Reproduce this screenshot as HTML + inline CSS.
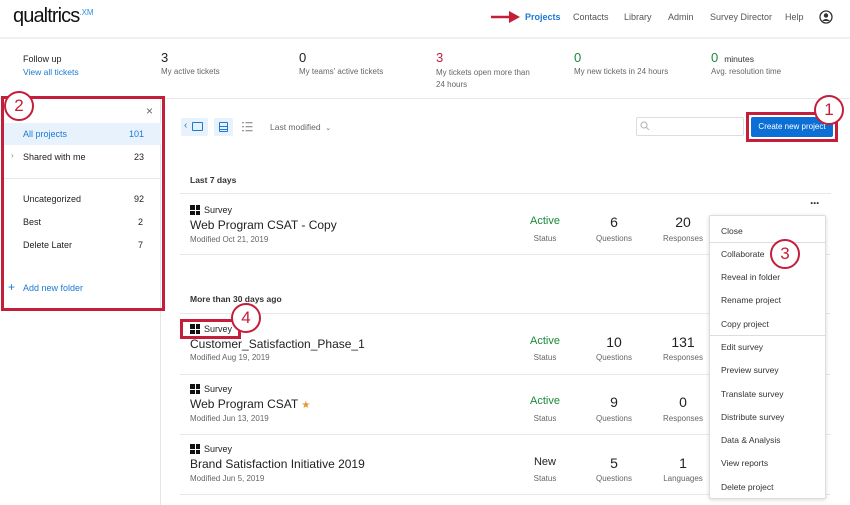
<!DOCTYPE html>
<html><head><meta charset="utf-8"><style>
*{margin:0;padding:0;box-sizing:border-box}
body{width:850px;height:505px;overflow:hidden;background:#fff;font-family:"Liberation Sans",sans-serif;color:#222;position:relative}
.a{position:absolute;white-space:nowrap}
.s9{font-size:9px}
.s8{font-size:8px;color:#666}
.blue{color:#1b79d4}
.hl{position:absolute;height:1px;background:#e8e8e8}
.red{border:3px solid #c41e3a}
.circ{position:absolute;width:30px;height:30px;border:2.5px solid #c41e3a;border-radius:50%;background:#fff;color:#c41e3a;font-size:17px;text-align:center;line-height:25px}
.num{font-size:14px;color:#222;text-align:center;width:60px}
.lbl{font-size:8px;color:#666;text-align:center;width:60px}
.mi{position:absolute;left:721px;font-size:8.5px;color:#333}
.sv{position:absolute;width:10px;height:10px}
.sv i{position:absolute;width:4.5px;height:4.5px;background:#111}
</style></head><body>
<!-- header -->
<div class="a" style="left:13px;top:5px;font-size:20px;letter-spacing:-0.9px;color:#111">qualtrics<span style="font-size:8px;letter-spacing:0;color:#2b8fd8;vertical-align:top;position:relative;top:3px">.XM</span></div>
<svg class="a" style="left:491px;top:10px" width="30" height="14"><line x1="0" y1="7" x2="22" y2="7" stroke="#c41e3a" stroke-width="2.5"/><polygon points="18,1 29,7 18,13" fill="#c41e3a"/></svg>
<div class="a s9 blue" style="left:525px;top:12px;font-weight:bold">Projects</div>
<div class="a s9" style="left:573px;top:12px;color:#555">Contacts</div>
<div class="a s9" style="left:624px;top:12px;color:#555">Library</div>
<div class="a s9" style="left:668px;top:12px;color:#555">Admin</div>
<div class="a s9" style="left:710px;top:12px;color:#555">Survey Director</div>
<div class="a s9" style="left:785px;top:12px;color:#555">Help</div>
<svg class="a" style="left:819px;top:10px" width="14" height="14"><circle cx="7" cy="7" r="6" fill="none" stroke="#333" stroke-width="1.3"/><circle cx="7" cy="5.5" r="2.2" fill="#333"/><path d="M3 11 Q7 7 11 11" fill="#333"/></svg>
<div class="a" style="left:0;top:37px;width:850px;height:2px;background:#f0f0f0"></div>
<!-- tickets -->
<div class="a s9" style="left:23px;top:54px">Follow up</div>
<div class="a blue" style="left:23px;top:67px;font-size:8.5px">View all tickets</div>
<div class="a" style="left:161px;top:50px;font-size:13px">3</div>
<div class="a s8" style="left:161px;top:67px">My active tickets</div>
<div class="a" style="left:299px;top:50px;font-size:13px">0</div>
<div class="a s8" style="left:299px;top:67px">My teams' active tickets</div>
<div class="a" style="left:436px;top:50px;font-size:13px;color:#c41e3a">3</div>
<div class="a s8" style="left:436px;top:67px;line-height:12px">My tickets open more than<br>24 hours</div>
<div class="a" style="left:574px;top:50px;font-size:13px;color:#1a8a3a">0</div>
<div class="a s8" style="left:574px;top:67px">My new tickets in 24 hours</div>
<div class="a" style="left:711px;top:50px;font-size:13px;color:#1a8a3a">0 <span style="font-size:8.5px;color:#333">&nbsp;minutes</span></div>
<div class="a s8" style="left:711px;top:67px">Avg. resolution time</div>
<div class="a" style="left:0;top:98px;width:850px;height:1px;background:#e8e8e8"></div>
<!-- left panel -->
<div class="a" style="left:160px;top:99px;width:1px;height:406px;background:#e6e6e6"></div>
<div class="a red" style="left:1px;top:96px;width:164px;height:215px"></div>
<div class="a" style="left:146px;top:104px;font-size:12px;color:#666">×</div>
<div class="a" style="left:4px;top:123px;width:157px;height:22px;background:#e8f2fc"></div>
<div class="a blue s9" style="left:23px;top:129px">All projects</div>
<div class="a blue s9" style="left:129px;top:129px">101</div>
<div class="a" style="left:11px;top:151px;font-size:8px;color:#888">›</div>
<div class="a s9" style="left:23px;top:152px">Shared with me</div>
<div class="a s9" style="left:134px;top:152px">23</div>
<div class="hl" style="left:4px;top:178px;width:157px"></div>
<div class="a s9" style="left:23px;top:194px">Uncategorized</div>
<div class="a s9" style="left:134px;top:194px">92</div>
<div class="a s9" style="left:23px;top:217px">Best</div>
<div class="a s9" style="left:138px;top:217px">2</div>
<div class="a s9" style="left:23px;top:240px">Delete Later</div>
<div class="a s9" style="left:138px;top:240px">7</div>
<div class="a blue" style="left:8px;top:280px;font-size:12px">+</div>
<div class="a blue s9" style="left:23px;top:283px">Add new folder</div>
<div class="circ" style="left:4px;top:91px">2</div>
<!-- toolbar -->
<div class="a" style="left:181px;top:118px;width:27px;height:18px;background:#e8f2fc;border-radius:2px"></div>
<div class="a blue" style="left:184px;top:120px;font-size:10px">‹</div>
<div class="a" style="left:192px;top:122px;width:11px;height:9px;border:1.3px solid #1b79d4;border-radius:1px"></div>
<div class="a" style="left:214px;top:118px;width:19px;height:18px;background:#e8f2fc;border-radius:2px"></div>
<div class="a" style="left:219px;top:122px;width:9px;height:10px;border:1.3px solid #1b79d4;border-radius:1px;background:linear-gradient(#1b79d4,#1b79d4) 0 3px/100% 1px no-repeat,linear-gradient(#1b79d4,#1b79d4) 0 6px/100% 1px no-repeat"></div>
<svg class="a" style="left:242px;top:122px" width="11" height="10"><g fill="#999"><rect x="0" y="0" width="2" height="1.3"/><rect x="0" y="4" width="2" height="1.3"/><rect x="0" y="8" width="2" height="1.3"/><rect x="3.5" y="0" width="7" height="1.3"/><rect x="3.5" y="4" width="7" height="1.3"/><rect x="3.5" y="8" width="7" height="1.3"/></g></svg>
<div class="a" style="left:270px;top:122px;font-size:8.5px;color:#666">Last modified &nbsp;<span style="font-size:7px">⌄</span></div>
<div class="a" style="left:636px;top:117px;width:108px;height:19px;border:1px solid #ddd;border-radius:2px"></div>
<svg class="a" style="left:640px;top:121px" width="10" height="10"><circle cx="4" cy="4" r="3" fill="none" stroke="#bbb" stroke-width="1.2"/><line x1="6.2" y1="6.2" x2="9" y2="9" stroke="#bbb" stroke-width="1.2"/></svg>
<div class="a red" style="left:746px;top:112px;width:92px;height:30px"></div>
<div class="a" style="left:751px;top:117px;width:82px;height:20px;background:#0b6fd6;border-radius:2px;color:#fff;font-size:8px;text-align:center;line-height:20px">Create new project</div>
<div class="circ" style="left:814px;top:95px">1</div>
<!-- list -->
<div class="a" style="left:190px;top:175px;font-size:8.5px;font-weight:bold;color:#333">Last 7 days</div>
<div class="hl" style="left:180px;top:193px;width:651px"></div>
<div class="a" style="left:810px;top:199px;font-size:12px;letter-spacing:-1px;font-weight:bold;line-height:8px">···</div>
<div class="hl" style="left:180px;top:254px;width:651px"></div>
<div class="a" style="left:190px;top:294px;font-size:8.5px;font-weight:bold;color:#333">More than 30 days ago</div>
<div class="hl" style="left:180px;top:313px;width:651px"></div>
<div class="hl" style="left:180px;top:374px;width:651px"></div>
<div class="hl" style="left:180px;top:434px;width:651px"></div>
<div class="hl" style="left:180px;top:494px;width:651px"></div>

<div class="sv" style="left:190px;top:205px"><i style="left:0;top:0"></i><i style="left:5.5px;top:0"></i><i style="left:0;top:5.5px"></i><i style="left:5.5px;top:5.5px"></i></div>
<div class="a s9" style="left:204px;top:205px">Survey</div>
<div class="a" style="left:190px;top:218px;font-size:12px">Web Program CSAT - Copy</div>
<div class="a s8" style="left:190px;top:235px">Modified Oct 21, 2019</div>
<div class="a num" style="left:515px;top:215px;font-size:11px;color:#1a8a3a">Active</div>
<div class="a lbl" style="left:515px;top:234px">Status</div>
<div class="a num" style="left:584px;top:214px">6</div>
<div class="a lbl" style="left:584px;top:234px">Questions</div>
<div class="a num" style="left:653px;top:214px">20</div>
<div class="a lbl" style="left:653px;top:234px">Responses</div>

<div class="sv" style="left:190px;top:324px"><i style="left:0;top:0"></i><i style="left:5.5px;top:0"></i><i style="left:0;top:5.5px"></i><i style="left:5.5px;top:5.5px"></i></div>
<div class="a s9" style="left:204px;top:324px">Survey</div>
<div class="a red" style="left:180px;top:319px;width:61px;height:20px"></div>
<div class="circ" style="left:231px;top:303px">4</div>
<div class="a" style="left:190px;top:337px;font-size:12px">Customer_Satisfaction_Phase_1</div>
<div class="a s8" style="left:190px;top:353px">Modified Aug 19, 2019</div>
<div class="a num" style="left:515px;top:335px;font-size:11px;color:#1a8a3a">Active</div>
<div class="a lbl" style="left:515px;top:353px">Status</div>
<div class="a num" style="left:584px;top:334px">10</div>
<div class="a lbl" style="left:584px;top:353px">Questions</div>
<div class="a num" style="left:653px;top:334px">131</div>
<div class="a lbl" style="left:653px;top:353px">Responses</div>

<div class="sv" style="left:190px;top:384px"><i style="left:0;top:0"></i><i style="left:5.5px;top:0"></i><i style="left:0;top:5.5px"></i><i style="left:5.5px;top:5.5px"></i></div>
<div class="a s9" style="left:204px;top:384px">Survey</div>
<div class="a" style="left:190px;top:397px;font-size:12px">Web Program CSAT <span style="color:#e8952a;font-size:10px">★</span></div>
<div class="a s8" style="left:190px;top:414px">Modified Jun 13, 2019</div>
<div class="a num" style="left:515px;top:395px;font-size:11px;color:#1a8a3a">Active</div>
<div class="a lbl" style="left:515px;top:414px">Status</div>
<div class="a num" style="left:584px;top:394px">9</div>
<div class="a lbl" style="left:584px;top:414px">Questions</div>
<div class="a num" style="left:653px;top:394px">0</div>
<div class="a lbl" style="left:653px;top:414px">Responses</div>

<div class="sv" style="left:190px;top:444px"><i style="left:0;top:0"></i><i style="left:5.5px;top:0"></i><i style="left:0;top:5.5px"></i><i style="left:5.5px;top:5.5px"></i></div>
<div class="a s9" style="left:204px;top:444px">Survey</div>
<div class="a" style="left:190px;top:457px;font-size:12px">Brand Satisfaction Initiative 2019</div>
<div class="a s8" style="left:190px;top:474px">Modified Jun 5, 2019</div>
<div class="a num" style="left:515px;top:456px;font-size:11px;color:#222">New</div>
<div class="a lbl" style="left:515px;top:474px">Status</div>
<div class="a num" style="left:584px;top:455px">5</div>
<div class="a lbl" style="left:584px;top:474px">Questions</div>
<div class="a num" style="left:653px;top:455px">1</div>
<div class="a lbl" style="left:653px;top:474px">Languages</div>

<!-- menu -->
<div class="a" style="left:709px;top:215px;width:117px;height:284px;background:#fff;border:1px solid #ddd;border-radius:2px;box-shadow:0 1px 4px rgba(0,0,0,.15)"></div>
<div class="hl" style="left:710px;top:242px;width:115px;background:#ddd"></div>
<div class="hl" style="left:710px;top:335px;width:115px;background:#ddd"></div>
<div class="mi" style="top:226px">Close</div>
<div class="mi" style="top:249px">Collaborate</div>
<div class="mi" style="top:272px">Reveal in folder</div>
<div class="mi" style="top:295px">Rename project</div>
<div class="mi" style="top:319px">Copy project</div>
<div class="mi" style="top:342px">Edit survey</div>
<div class="mi" style="top:365px">Preview survey</div>
<div class="mi" style="top:389px">Translate survey</div>
<div class="mi" style="top:412px">Distribute survey</div>
<div class="mi" style="top:435px">Data &amp; Analysis</div>
<div class="mi" style="top:458px">View reports</div>
<div class="mi" style="top:482px">Delete project</div>
<div class="circ" style="left:770px;top:239px">3</div>
</body></html>
